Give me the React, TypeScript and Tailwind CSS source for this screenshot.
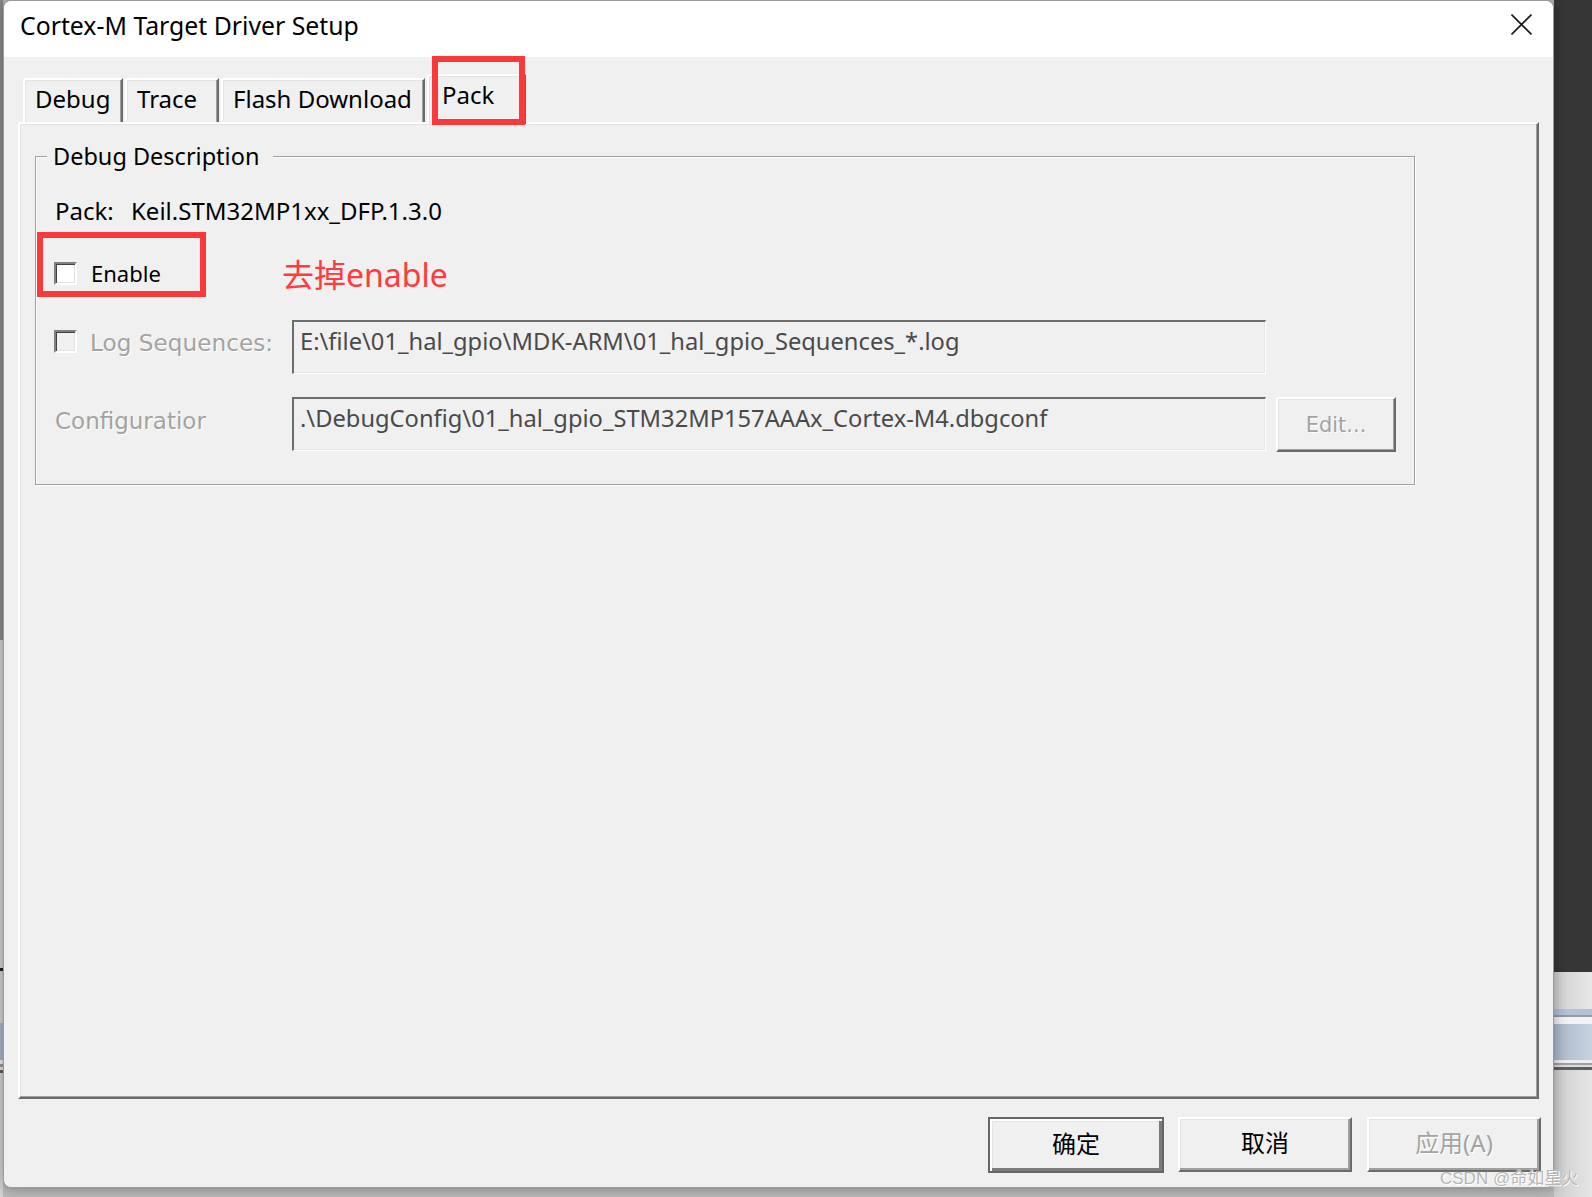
const ui = "font-['Noto_Sans','Noto_Sans_CJK_SC',sans-serif]";
const grayed =
  "font-['DejaVu_Sans',sans-serif] text-[#a3a3a3] [text-shadow:1px_1px_0_#ffffff]";

const Check = ({ disabled }: { disabled?: boolean }) => (
  <div
    className={`h-[23px] w-[23px] shrink-0 border-2 border-t-[#808080] border-l-[#808080] border-r-white border-b-white shadow-[inset_1px_1px_0_#404040,inset_-1px_-1px_0_#e3e3e3] ${
      disabled ? "bg-[#f0f0f0]" : "bg-white"
    }`}
  />
);

const Tab = ({ label, className }: { label: string; className: string }) => (
  <div
    className={`flex h-[44px] items-start rounded-tl-[3px] border-t-2 border-l-2 border-r-2 border-t-white border-l-white border-r-[#6b6b6b] pl-[10px] pt-[3px] text-[24px] leading-[32px] text-black shadow-[inset_-1px_0_0_#a0a0a0,inset_1px_1px_0_#e3e3e3] ${className}`}
  >
    {label}
  </div>
);

const Field = ({ text }: { text: string }) => (
  <div className="h-[54px] w-[974px] whitespace-nowrap border-t-2 border-l-2 border-b border-r border-t-[#6d6d6d] border-l-[#6d6d6d] border-b-white border-r-white bg-[#f0f0f0] pl-[6px] pt-[3px] text-[23.7px] leading-[32px] text-[#4a4a4a] shadow-[inset_-1px_-1px_0_#e3e3e3]">
    {text}
  </div>
);

export default function App() {
  return (
    <div className={`relative flex h-[1197px] w-[1592px] items-start overflow-hidden bg-[#b9b9b9] ${ui}`}>
      {/* window behind, left edge */}
      <div className="flex h-full w-[3px] shrink-0 flex-col">
        <div className="h-[640px] bg-[#8c8c8c]" />
        <div className="h-[328px] bg-[#d4d4d4]" />
        <div className="h-[3px] bg-[#222]" />
        <div className="h-[52px] bg-[#d4d4d4]" />
        <div className="h-[37px] bg-[#a9b8c9]" />
        <div className="h-[4px] bg-[#eee]" />
        <div className="h-[3px] bg-[#9a9a9a]" />
        <div className="h-[3px] bg-[#e6e6e6]" />
        <div className="h-[3px] bg-[#5f5f5f]" />
        <div className="flex-1 bg-[#d4d4d4]" />
      </div>

      {/* dialog */}
      <div className="relative z-10 flex h-[1188px] w-[1551px] shrink-0 flex-col overflow-hidden rounded-[8px] border border-[#9a9a9a] bg-[#f0f0f0] shadow-[0_0_14px_rgba(0,0,0,0.35)]">
        {/* title bar */}
        <div className="flex h-[56px] shrink-0 items-start justify-between bg-white pl-[16px] pr-[21px]">
          <div className="pt-[8px] text-[24.8px] leading-[32px] text-black">Cortex-M Target Driver Setup</div>
          <svg className="mt-[13px]" width="21" height="21" viewBox="0 0 21 21" fill="none" stroke="#1a1a1a" strokeWidth="1.6">
            <path d="M0.5 0.5 20.5 20.5M20.5 0.5 0.5 20.5" />
          </svg>
        </div>

        {/* tabs */}
        <div className="flex h-[65px] shrink-0 items-end gap-[2px] pl-[19px]">
          <Tab label="Debug" className="w-[100px]" />
          <Tab label="Trace" className="w-[94px]" />
          <Tab label="Flash Download" className="w-[204px]" />
          <div className="relative z-20 -mb-[2px] flex h-[50px] w-[99px] items-start rounded-tl-[3px] border-t-2 border-l-2 border-r-2 border-t-white border-l-white border-r-[#6b6b6b] bg-[#f0f0f0] pl-[13px] pt-[3px] text-[24px] leading-[32px] text-black shadow-[inset_-1px_0_0_#a0a0a0,inset_1px_1px_0_#e3e3e3]">
            Pack
            <div className="absolute left-[3px] top-[-20px] h-[69px] w-[93px] border-[6px] border-[#f93a3a]" />
          </div>
        </div>

        {/* panel */}
        <div className="mx-[14px] flex h-[977px] shrink-0 flex-col border-2 border-t-white border-l-white border-r-[#6b6b6b] border-b-[#6b6b6b] shadow-[inset_-1px_-1px_0_#a0a0a0,inset_1px_1px_0_#e3e3e3]">
          <fieldset className="ml-[15px] mt-[16px] w-[1380px] border border-[#a0a0a0] pb-[32px] shadow-[1px_1px_0_#ffffff,inset_1px_1px_0_#ffffff]">
            <legend className="ml-[11px] bg-[#f0f0f0] pl-[6px] pr-[14px] text-[23.5px] leading-[32px] text-black">
              Debug Description
            </legend>

            <div className="mt-[23px] flex h-[32px] items-start pl-[19px] text-[24px] leading-[32px] text-black">
              <span className="w-[76px]">Pack:</span>
              <span>Keil.STM32MP1xx_DFP.1.3.0</span>
            </div>

            <div className="mt-[5px] flex items-start">
              <div className="ml-[1px] flex h-[65px] w-[169px] items-start border-[6px] border-[#f93a3a] pl-[11px] pt-[20px]">
                <div className="mt-[4px]">
                  <Check />
                </div>
                <span className="ml-[14px] text-[22px] leading-[30px] text-black">Enable</span>
              </div>
              <span className="ml-[76px] mt-[21px] text-[32px] leading-[44px] text-[#ff3b3b]">去掉enable</span>
            </div>

            <div className="mt-[23px] flex items-start">
              <div className="flex w-[256px] items-start pl-[18px]">
                <div className="mt-[10px]">
                  <Check disabled />
                </div>
                <span className={`ml-[13px] mt-[8px] whitespace-nowrap text-[23.2px] leading-[30px] ${grayed}`}>Log Sequences:</span>
              </div>
              <Field text="E:\file\01_hal_gpio\MDK-ARM\01_hal_gpio_Sequences_*.log" />
            </div>

            <div className="mt-[23px] flex items-start">
              <div className="w-[256px] pl-[19px] pt-[9px]">
                <span className={`text-[23px] leading-[30px] ${grayed}`}>Configuratior</span>
              </div>
              <Field text=".\DebugConfig\01_hal_gpio_STM32MP157AAAx_Cortex-M4.dbgconf" />
              <div className="ml-[10px] flex h-[55px] w-[120px] items-center justify-center border-2 border-t-white border-l-white border-r-[#6b6b6b] border-b-[#6b6b6b] shadow-[inset_-1px_-1px_0_#a0a0a0,inset_1px_1px_0_#e3e3e3]">
                <span className={`text-[21px] leading-[30px] ${grayed}`}>Edit...</span>
              </div>
            </div>
          </fieldset>
        </div>

        {/* buttons */}
        <div className="mt-[18px] flex shrink-0 justify-end gap-[14px] pr-[12px]">
          <div className="flex h-[56px] w-[176px] items-center justify-center border-2 border-[#666] pb-[3px] text-[24px] text-black shadow-[inset_2px_2px_0_#ffffff,inset_-3px_-3px_0_#7a7a7a,inset_3px_3px_0_#e3e3e3]">
            确定
          </div>
          <div className="flex h-[55px] w-[174px] items-center justify-center border-2 border-t-white border-l-white border-r-[#6b6b6b] border-b-[#6b6b6b] pb-[3px] text-[24px] text-black shadow-[inset_-2px_-2px_0_#a0a0a0,inset_1px_1px_0_#e3e3e3]">
            取消
          </div>
          <div className="ml-[1px] flex h-[55px] w-[174px] items-center justify-center border-2 border-t-white border-l-white border-r-[#6b6b6b] border-b-[#6b6b6b] pb-[3px] text-[24px] text-[#a3a3a3] [text-shadow:1px_1px_0_#ffffff] shadow-[inset_-2px_-2px_0_#a0a0a0,inset_1px_1px_0_#e3e3e3]">
            应用(A)
          </div>
        </div>
      </div>

      {/* window behind, right edge */}
      <div className="flex h-full flex-1 flex-col">
        <div className="h-[972px] bg-[#363636]" />
        <div className="h-[37px] bg-gradient-to-r from-[#cfcfcf] to-[#e8e8e8]" />
        <div className="h-[6px] bg-[#b3c1d9]" />
        <div className="h-[2px] bg-[#9a9a9a]" />
        <div className="h-[7px] bg-[#f2f2f2]" />
        <div className="h-[36px] bg-gradient-to-r from-[#a9b8c9] to-[#c6d3e0]" />
        <div className="h-[3px] bg-[#eeeeee]" />
        <div className="h-[2px] bg-[#a0a0a0]" />
        <div className="h-[2px] bg-[#dddddd]" />
        <div className="h-[3px] bg-[#5f5f5f]" />
        <div className="flex-1 bg-gradient-to-r from-[#cdcdcd] to-[#e6e6e6]" />
      </div>

      {/* watermark */}
      <div className="absolute left-[1440px] top-[1167px] z-30 whitespace-nowrap font-['Liberation_Sans','Noto_Sans_CJK_SC',sans-serif] text-[17px] leading-[24px] text-[#b5b5b5] [text-shadow:0_0_1px_#ffffff,1px_1px_0_#ffffff]">
        CSDN @命如星火
      </div>
    </div>
  );
}
